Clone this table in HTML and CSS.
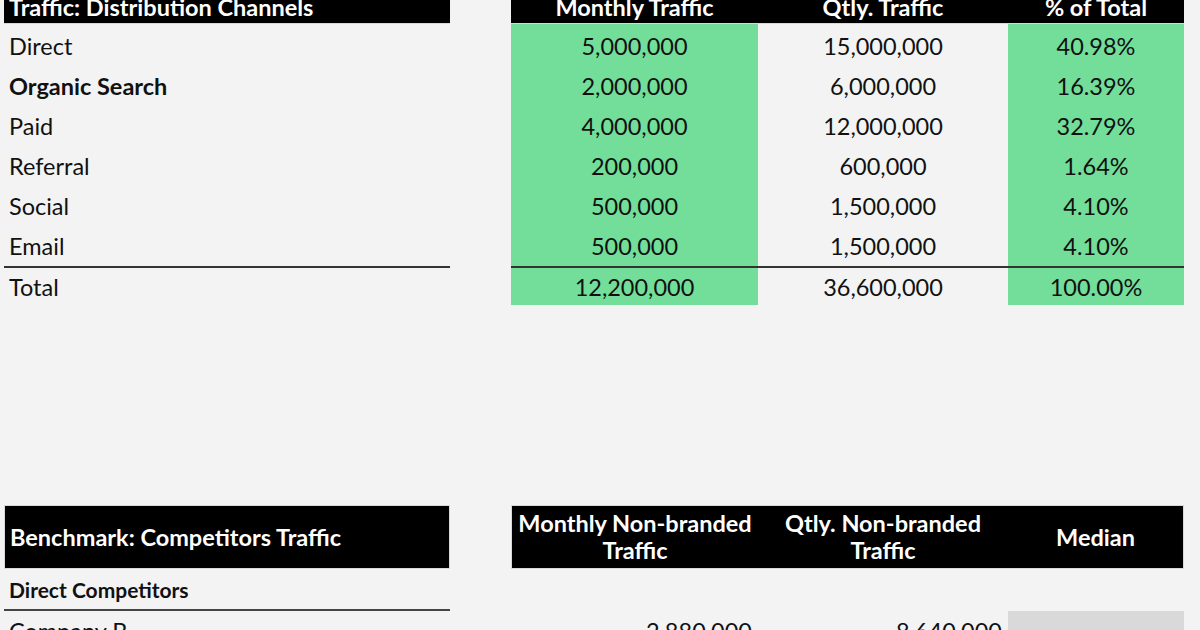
FILE: index.html
```html
<!DOCTYPE html>
<html>
<head>
<meta charset="utf-8">
<link rel="stylesheet" href="styles.css">
</head>
<body>
<div class="sheet">
  <section class="table top">
    <div class="hd label">Traffic: Distribution Channels</div>
    <div class="gap"></div>
    <div class="hd num">Monthly Traffic</div>
    <div class="hd num">Qtly. Traffic</div>
    <div class="hd num last">% of Total</div>

    <div class="sp"></div><div class="gap"></div><div class="sp green"></div><div class="sp"></div><div class="sp green"></div>

    <div class="cell label">Direct</div><div class="gap"></div>
    <div class="cell num green">5,000,000</div><div class="cell num">15,000,000</div><div class="cell num green">40.98%</div>

    <div class="cell label bold">Organic Search</div><div class="gap"></div>
    <div class="cell num green">2,000,000</div><div class="cell num">6,000,000</div><div class="cell num green">16.39%</div>

    <div class="cell label">Paid</div><div class="gap"></div>
    <div class="cell num green">4,000,000</div><div class="cell num">12,000,000</div><div class="cell num green">32.79%</div>

    <div class="cell label">Referral</div><div class="gap"></div>
    <div class="cell num green">200,000</div><div class="cell num">600,000</div><div class="cell num green">1.64%</div>

    <div class="cell label">Social</div><div class="gap"></div>
    <div class="cell num green">500,000</div><div class="cell num">1,500,000</div><div class="cell num green">4.10%</div>

    <div class="cell label">Email</div><div class="gap"></div>
    <div class="cell num green">500,000</div><div class="cell num">1,500,000</div><div class="cell num green">4.10%</div>

    <div class="cell label total">Total</div><div class="gap"></div>
    <div class="cell num green total">12,200,000</div><div class="cell num total">36,600,000</div><div class="cell num green total">100.00%</div>
  </section>

  <section class="table bottom">
    <div class="hd2 label">Benchmark: Competitors Traffic</div>
    <div class="gap"></div>
    <div class="hd2 num">Monthly Non-branded<br>Traffic</div>
    <div class="hd2 num">Qtly. Non-branded<br>Traffic</div>
    <div class="hd2 num last">Median</div>

    <div class="cell label bold small underline">Direct Competitors</div><div class="gap"></div>
    <div class="cell"></div><div class="cell"></div><div class="cell"></div>

    <div class="cell label">Company B</div><div class="gap"></div>
    <div class="cell right">2,880,000</div><div class="cell right">8,640,000</div><div class="cell grey"></div>
  </section>
</div>
</body>
</html>
```

FILE: styles.css
```css
html, body {
  margin: 0;
  padding: 0;
  background: #f3f3f3;
  overflow: hidden;
}
body {
  font-family: Lato, "Liberation Sans", sans-serif;
  color: #111;
}
.sheet {
  margin-top: -16px;
  padding-left: 4px;
}
.table {
  display: grid;
  grid-template-columns: 446px 61px 247px 250px 176px;
}
.hd {
  height: 40px;
  background: #000;
  color: #fff;
  font-weight: 700;
  font-size: 23.5px;
  display: flex;
  align-items: flex-end;
  padding-bottom: 4px;
  box-sizing: border-box;
  line-height: 24px;
  border-bottom: 1px solid #d8d8d8;
}
.hd.label { padding-left: 5px; }
.hd.num { justify-content: center; }
.sp { height: 2px; }
.green { background: #72de9a; }
.grey { background: #d9d9d9; }
.cell {
  height: 40px;
  font-size: 23.5px;
  display: flex;
  align-items: center;
  box-sizing: border-box;
}
.cell.label { padding-left: 5px; }
.cell.num { justify-content: center; }
.cell.right { justify-content: flex-end; padding-right: 6px; }
.bold { font-weight: 700; }
.small { font-size: 21px; }
.total {
  border-top: 2px solid #333;
  height: 39px;
}
.bottom { margin-top: 200px; }
.hd2 {
  height: 64px;
  background: #000;
  color: #fff;
  font-weight: 700;
  font-size: 23.5px;
  line-height: 27px;
  display: flex;
  align-items: center;
  box-sizing: border-box;
  border: 1px solid #d8d8d8;
}
.hd2.label { padding-left: 5px; }
.hd2.num { justify-content: center; text-align: center; border-left: none; border-right: none; }
.hd2.num:nth-child(3) { border-left: 1px solid #d8d8d8; }
.hd2.last { border-right: 1px solid #d8d8d8; }
.underline {
  border-bottom: 2px solid #444;
  height: 42px;
}
```
